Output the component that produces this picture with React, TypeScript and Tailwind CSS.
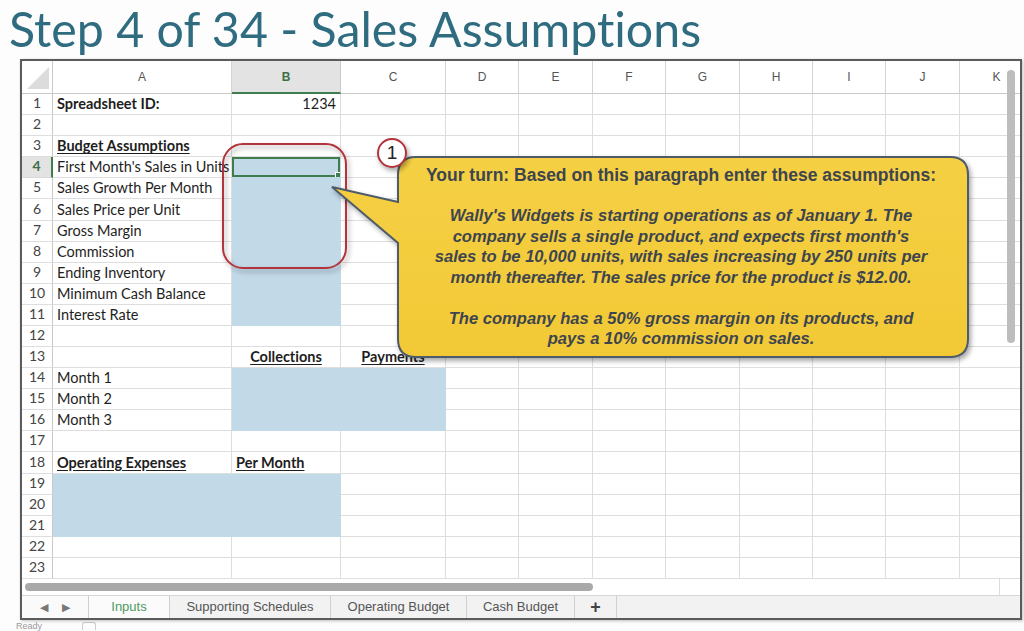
import React from "react";

type Cell = { text?: string; bold?: boolean; under?: boolean; align?: "left" | "right" | "center" };

const LETTERS = ["A", "B", "C", "D", "E", "F", "G", "H", "I", "J", "K"];

const CELLS: Record<string, Cell> = {
  "1-0": { text: "Spreadsheet ID:", bold: true },
  "1-1": { text: "1234", align: "right" },
  "3-0": { text: "Budget Assumptions", bold: true, under: true },
  "4-0": { text: "First Month's Sales in Units" },
  "5-0": { text: "Sales Growth Per Month" },
  "6-0": { text: "Sales Price per Unit" },
  "7-0": { text: "Gross Margin" },
  "8-0": { text: "Commission" },
  "9-0": { text: "Ending Inventory" },
  "10-0": { text: "Minimum Cash Balance" },
  "11-0": { text: "Interest Rate" },
  "13-1": { text: "Collections", bold: true, under: true, align: "center" },
  "13-2": { text: "Payments", bold: true, under: true, align: "center" },
  "14-0": { text: "Month 1" },
  "15-0": { text: "Month 2" },
  "16-0": { text: "Month 3" },
  "18-0": { text: "Operating Expenses", bold: true, under: true },
  "18-1": { text: "Per Month", bold: true, under: true },
};

function isFilled(r: number, c: number) {
  if (c === 1 && r >= 4 && r <= 11) return true;
  if ((c === 1 || c === 2) && r >= 14 && r <= 16) return true;
  if ((c === 0 || c === 1) && r >= 19 && r <= 21) return true;
  return false;
}

const TABS = [
  { label: "Inputs", w: "w-[81px]", active: true },
  { label: "Supporting Schedules", w: "w-[161px]" },
  { label: "Operating Budget", w: "w-[136px]" },
  { label: "Cash Budget", w: "w-[108px]" },
  { label: "+", w: "w-[42px]" },
];

function Grid() {
  const rows = Array.from({ length: 23 }, (_, i) => i + 1);
  return (
    <div className="grid h-full w-[1012px] grid-cols-[31px_179px_109px_105px_73px_74px_73px_74px_73px_73px_74px_74px] grid-rows-[33px_repeat(23,minmax(0,1fr))] font-['Lato',sans-serif] text-[14.5px] text-[#1e1e1e] [font-variant-ligatures:none]">
      {/* corner + column letters */}
      <div className="relative border-r border-b border-[#c9c9c9] bg-white">
        <svg className="absolute right-[3px] bottom-[4px]" width="22" height="22" viewBox="0 0 22 22">
          <polygon points="22,0 22,22 0,22" fill="#dcdcdc" />
        </svg>
      </div>
      {LETTERS.map((l) => (
        <div
          key={l}
          className={
            l === "B"
              ? "flex items-center justify-center border-r border-b-2 border-r-[#c9c9c9] border-b-[#3f7d4f] bg-[#e3e3e3] font-['Liberation_Sans',sans-serif] text-[12px] font-bold text-[#3c6e48]"
              : "flex items-center justify-center border-r border-b border-[#d4d4d4] border-b-[#c9c9c9] bg-white font-['Liberation_Sans',sans-serif] text-[12px] text-[#555]"
          }
        >
          {l}
        </div>
      ))}
      {rows.map((r) => (
        <React.Fragment key={r}>
          <div
            className={
              r === 4
                ? "flex items-end justify-center border-r-2 border-b border-r-[#3f7d4f] border-b-[#d9d9d9] bg-[#e3e3e3] pb-[1px] text-[14px] font-bold text-[#3c6e48]"
                : "flex items-end justify-center border-r border-b border-r-[#c9c9c9] border-b-[#dedede] bg-white pb-[1px] text-[14px] text-[#444]"
            }
          >
            {r}
          </div>
          {LETTERS.map((_, c) => {
            const cell = CELLS[`${r}-${c}`];
            const filled = isFilled(r, c);
            const align =
              cell?.align === "right" ? "justify-end" : cell?.align === "center" ? "justify-center" : "justify-start";
            return (
              <div
                key={c}
                className={
                  (filled
                    ? "border-r border-b border-[#c2d9e8] bg-[#c2d9e8] "
                    : "border-r border-b border-[#dedede] bg-white ") +
                  "relative flex items-end overflow-hidden whitespace-nowrap px-[4px] pb-[1px] " +
                  align
                }
              >
                {cell?.text && (
                  <span
                    className={
                      "leading-[18px] " + (cell.bold ? "font-bold " : "") + (cell.under ? "underline underline-offset-2" : "")
                    }
                  >
                    {cell.text}
                  </span>
                )}
                {r === 4 && c === 1 && (
                  <>
                    <div className="absolute inset-0 border-2 border-[#3f7d4f]" />
                    <div className="absolute right-[-1px] bottom-[-1px] h-[6px] w-[6px] border border-white bg-[#3f7d4f]" />
                  </>
                )}
              </div>
            );
          })}
        </React.Fragment>
      ))}
    </div>
  );
}

export default function App() {
  return (
    <div className="relative h-[631px] w-[1024px] overflow-hidden bg-[#fdfdfd]">
      <h1 className="h-[59px] whitespace-nowrap pl-[9px] pt-[1px] font-['Lato',sans-serif] text-[48.3px] leading-[54px] text-[#2f6c80] [font-variant-ligatures:none]">
        Step 4 of 34 - Sales Assumptions
      </h1>

      <div className="relative ml-[20px] flex h-[561px] w-[1002px] flex-col overflow-hidden border-2 border-[#5b5b5b] bg-white shadow-[1px_1px_3px_rgba(0,0,0,0.25)]">
        <div className="flex-1 overflow-hidden">
          <Grid />
        </div>

        <div className="flex h-[16px] items-center bg-white">
          <div className="flex h-full w-[978px] items-center border-r border-[#dcdcdc] pl-[3px]">
            <div className="h-[8px] w-[568px] rounded-full bg-[#a9a9a9]" />
          </div>
        </div>

        <div className="flex h-[23px] items-stretch border-t border-[#d6d6d6] bg-[#f2f2f2] font-['Liberation_Sans',sans-serif] text-[13px] text-[#555]">
          <div className="flex w-[67px] items-center justify-center gap-[14px] border-r border-[#d0d0d0] bg-[#fafafa] text-[11px] text-[#777]">
            <span>◀</span>
            <span>▶</span>
          </div>
          {TABS.map((t) => (
            <div
              key={t.label}
              className={
                t.w +
                " flex items-center justify-center border-r border-[#d0d0d0] " +
                (t.active ? "bg-[#fbfbfb] text-[#4f9a5e]" : t.label === "+" ? "text-[18px] font-bold text-[#444]" : "")
              }
            >
              {t.label}
            </div>
          ))}
        </div>

        {/* vertical scrollbar thumb */}
        <div className="absolute top-[9px] left-[985px] h-[273px] w-[8px] rounded-full bg-[#bdbdbd]" />
      </div>

      <div className="flex items-center gap-[40px] pl-[16px] pt-[1px] font-['Liberation_Sans',sans-serif] text-[9px] leading-[10px] text-[#999]">
        <span>Ready</span>
        <span className="h-[8px] w-[14px] rounded-t-[3px] border border-b-0 border-[#ccc]" />
      </div>

      {/* overlays: highlight box, callout, step marker */}
      <svg className="pointer-events-none absolute left-0 top-0" width="1024" height="631" viewBox="0 0 1024 631">
        <defs>
          <filter id="sh" x="-20%" y="-20%" width="150%" height="150%">
            <feDropShadow dx="2" dy="3" stdDeviation="2.5" floodColor="#000" floodOpacity="0.35" />
          </filter>
          <linearGradient id="yel" x1="0" y1="0" x2="0" y2="1">
            <stop offset="0" stopColor="#f5d044" />
            <stop offset="1" stopColor="#f2c936" />
          </linearGradient>
        </defs>
        <rect x="223" y="144" width="123" height="124" rx="20" fill="none" stroke="#b2343c" strokeWidth="2" filter="url(#sh)" />
        <path
          d="M416 157 H950 Q968 157 968 175 V339 Q968 357 950 357 H416 Q398 357 398 339 V243 L332 187 L398 202 V175 Q398 157 416 157 Z"
          fill="url(#yel)"
          stroke="#4e5b68"
          strokeWidth="2"
          filter="url(#sh)"
        />
        <circle cx="392" cy="153" r="14" fill="#fff" stroke="#b2343c" strokeWidth="2" filter="url(#sh)" />
      </svg>

      <div className="absolute left-[378px] top-[139px] flex h-[28px] w-[28px] items-center justify-center font-['Liberation_Sans',sans-serif] text-[19px] text-[#222]">
        1
      </div>

      <div className="absolute left-[396px] top-[165px] w-[570px] text-center font-['Liberation_Sans',sans-serif] leading-[20.5px] text-[#3e454e]">
        <div className="text-[17.5px] font-bold">Your turn: Based on this paragraph enter these assumptions:</div>
        <div className="mt-[20.5px] text-[16.6px] font-bold italic">
          Wally's Widgets is starting operations as of January 1. The
          <br />
          company sells a single product, and expects first month's
          <br />
          sales to be 10,000 units, with sales increasing by 250 units per
          <br />
          month thereafter. The sales price for the product is $12.00.
        </div>
        <div className="mt-[20.5px] text-[16.6px] font-bold italic">
          The company has a 50% gross margin on its products, and
          <br />
          pays a 10% commission on sales.
        </div>
      </div>
    </div>
  );
}
